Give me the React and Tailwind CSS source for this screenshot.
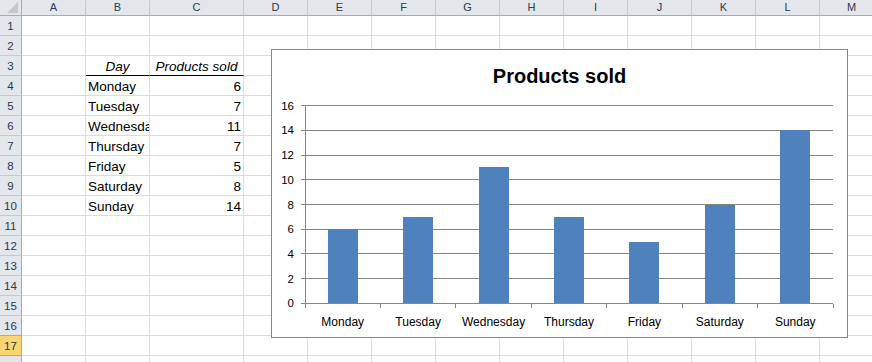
import React from "react";

const COLS = ["A", "B", "C", "D", "E", "F", "G", "H", "I", "J", "K", "L", "M", "N"];
const DATA = [
  ["Monday", 6],
  ["Tuesday", 7],
  ["Wednesday", 11],
  ["Thursday", 7],
  ["Friday", 5],
  ["Saturday", 8],
  ["Sunday", 14],
];

function Cell({ row, col }) {
  const base = "border-r border-b border-[#dadcdd] relative";
  if (row === 3 && col === 1) {
    return (
      <div className="border-r border-b border-r-[#dadcdd] border-b-black text-center italic text-[13.5px] leading-[22px] text-black whitespace-nowrap">
        Day
      </div>
    );
  }
  if (row === 3 && col === 2) {
    return (
      <div className="border-r border-b border-r-[#dadcdd] border-b-black text-center italic text-[13.5px] leading-[22px] text-black whitespace-nowrap">
        Products sold
      </div>
    );
  }
  const d = row >= 4 && row <= 10 ? DATA[row - 4] : null;
  if (d && col === 1) {
    return (
      <div className={base + " pl-[2px] text-[13.5px] leading-[22px] text-black whitespace-nowrap overflow-hidden"}>
        {d[0]}
      </div>
    );
  }
  if (d && col === 2) {
    return (
      <div className={base + " pr-[2px] text-right text-[13.5px] leading-[22px] text-black whitespace-nowrap"}>
        {d[1]}
      </div>
    );
  }
  return <div className={base} />;
}

function Chart() {
  const x0 = 33;
  const x1 = 561;
  const catW = (x1 - x0) / 7;
  const y0 = 213.3;
  const unit = 12.35;
  const yv = (v) => y0 - unit * v;
  const crisp = (y) => Math.floor(y) + 0.5;
  const ticks = [0, 2, 4, 6, 8, 10, 12, 14, 16];
  return (
    <div className="absolute left-[271px] top-[49px] w-[577px] h-[289px] border border-[#868686] bg-white flex flex-col">
      <div className="h-[40px] pt-[16px] text-center text-[20px] font-bold leading-[20px] text-black">
        Products sold
      </div>
      <svg width="575" height="247" viewBox="0 0 575 247" className="block">
        {ticks.map((v) => (
          <g key={v}>
            <line x1={x0} x2={x1} y1={crisp(yv(v))} y2={crisp(yv(v))} stroke="#868686" strokeWidth="1" shapeRendering="crispEdges" />
            <line x1={x0 - 4} x2={x0} y1={crisp(yv(v))} y2={crisp(yv(v))} stroke="#868686" strokeWidth="1" shapeRendering="crispEdges" />
            <text x="22" y={yv(v) + 4} textAnchor="end" fontSize="11.5" fontFamily="Liberation Sans, Arial, sans-serif" fill="#000">
              {v}
            </text>
          </g>
        ))}
        {DATA.map(([name, v], i) => {
          const bx = x0 + i * catW + (catW - 30) / 2;
          return (
            <g key={name}>
              <rect x={bx} y={yv(v)} width="30" height={y0 - yv(v)} fill="#4f81bd" shapeRendering="crispEdges" />
              <text x={x0 + i * catW + catW / 2} y="236" textAnchor="middle" fontSize="12" fontFamily="Liberation Sans, Arial, sans-serif" fill="#000">
                {name}
              </text>
            </g>
          );
        })}
        <line x1={x0 + 0.5} x2={x0 + 0.5} y1={crisp(yv(16))} y2={crisp(y0)} stroke="#868686" strokeWidth="1" shapeRendering="crispEdges" />
        <line x1={x0} x2={x1} y1={crisp(y0)} y2={crisp(y0)} stroke="#868686" strokeWidth="1" shapeRendering="crispEdges" />
        {Array.from({ length: 8 }).map((_, i) => {
          const x = Math.floor(x0 + i * catW) + 0.5;
          return (
            <line key={i} x1={x} x2={x} y1={crisp(y0)} y2={crisp(y0) + 4} stroke="#868686" strokeWidth="1" shapeRendering="crispEdges" />
          );
        })}
      </svg>
    </div>
  );
}

export default function App() {
  const rows = Array.from({ length: 18 }, (_, i) => i + 1);
  return (
    <div className="relative w-[872px] h-[362px] overflow-hidden bg-white font-['Liberation_Sans',Arial,sans-serif]">
      <div className="grid grid-cols-[22px_64px_64px_94px_repeat(10,64px)] grid-rows-[16px_repeat(18,20px)]">
        <div className="bg-[#e3e6ea] border-r border-b border-r-[#a7abb0] border-b-[#a7abb0] relative">
          <svg width="21" height="15" className="absolute left-0 top-0">
            <polygon points="18,2 18,13 7,13" fill="#c3c7cc" />
          </svg>
        </div>
        {COLS.slice(0, 13).map((c) => (
          <div
            key={c}
            className="bg-[#e3e6ea] border-r border-b border-r-[#c5c9ce] border-b-[#a7abb0] text-center text-[11px] leading-[15px] text-[#2b3a4e]"
          >
            {c}
          </div>
        ))}
        {rows.map((r) => (
          <React.Fragment key={r}>
            <div
              className={
                r === 17
                  ? "bg-[#fad573] border-r border-b border-t border-[#e9a23b] -mt-px h-[21px] text-center text-[11.5px] leading-[21px] text-[#2b3a4e]"
                  : "bg-[#e3e6ea] border-r border-b border-r-[#a7abb0] border-b-[#c5c9ce] text-center text-[11.5px] leading-[20px] text-[#2b3a4e]"
              }
            >
              {r}
            </div>
            {COLS.slice(0, 13).map((c, ci) => (
              <Cell key={c} row={r} col={ci} />
            ))}
          </React.Fragment>
        ))}
      </div>
      <Chart />
    </div>
  );
}
